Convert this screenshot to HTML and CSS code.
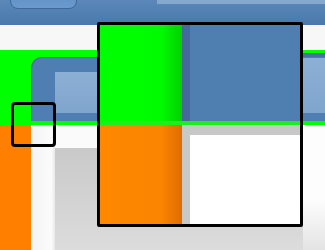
FILE: index.html
```html
<!DOCTYPE html>
<html>
<head>
<meta charset="utf-8">
<link rel="stylesheet" href="styles.css">
</head>
<body>
<div class="screen">
  <div class="topbar">
    <div class="pill"></div>
    <div class="topstrip"></div>
  </div>
  <div class="whiteband"></div>
  <div class="desk">
    <div class="window">
      <div class="title">
        <div class="pane-left"><div class="pane-inner"></div></div>
        <div class="pane-right"><div class="pane-inner"></div></div>
      </div>
      <div class="wbody">
        <div class="frame"></div>
        <div class="content"></div>
        <div class="content-right"></div>
      </div>
    </div>
  </div>
  <div class="marker"></div>
  <div class="magnifier">
    <div class="mrow mtop">
      <div class="mgreen"></div>
      <div class="mshadow"></div>
      <div class="mblue"></div>
    </div>
    <div class="mline"></div>
    <div class="mrow mbottom">
      <div class="morange"></div>
      <div class="mgrey"><div class="mwhite"></div></div>
    </div>
  </div>
</div>
</body>
</html>
```
FILE: styles.css
```css
html, body {
  margin: 0;
  padding: 0;
}
.screen {
  position: relative;
  width: 325px;
  height: 250px;
  overflow: hidden;
  display: flex;
  flex-direction: column;
}
.topbar {
  height: 25px;
  flex: none;
  position: relative;
  background: linear-gradient(to bottom, #5b88b9, #4a78aa);
}
.pill {
  position: absolute;
  left: 10px;
  top: -10px;
  width: 65px;
  height: 17px;
  border: 1px solid #3d6899;
  border-radius: 8px;
  background: linear-gradient(to bottom, #5e8fc4, #6a9acd);
}
.topstrip {
  position: absolute;
  left: 157px;
  right: 0;
  top: 0;
  height: 4px;
  background: #86a8cd;
}
.whiteband {
  height: 25px;
  flex: none;
  background: #f7f7f7;
}
.desk {
  flex: 1;
  background: linear-gradient(to bottom, #00ff00 0 75px, #ff8000 75px);
  padding-top: 7px;
  padding-left: 31px;
  display: flex;
}
.window {
  flex: 1;
  display: flex;
  flex-direction: column;
}
.title {
  height: 64px;
  display: flex;
  box-sizing: border-box;
  background: #4f7fb2;
  border-top: 1px solid #3f6d9f;
  border-left: 1px solid #3f6d9f;
  border-radius: 11px 0 0 0;
  padding-left: 23px;
  margin-bottom: 4px;
}
.pane-left {
  flex: 1;
  padding-top: 14px;
  padding-bottom: 8px;
  display: flex;
}
.pane-right {
  width: 22px;
  margin-top: -5px;
  border-top: 4px solid #46709f;
  background: #4f7fb2;
  padding-top: 1px;
  padding-bottom: 8px;
  display: flex;
}
.pane-inner {
  flex: 1;
  background: linear-gradient(to bottom, #8cafd5, #80a5cc);
}
.wbody {
  flex: 1;
  display: flex;
}
.frame {
  width: 24px;
  background: linear-gradient(to right, #f4f4f4, #fbfbfb 85%, #e8e8e8);
}
.content {
  flex: 1;
  background: linear-gradient(to bottom, #fafafa 0 23px, #c9c9c9 23px, #dcdcdc 100%);
}
.content-right {
  width: 22px;
  background: linear-gradient(to bottom, #fdfdfd 0 60%, #e4e4e4 100%);
}
.marker {
  position: absolute;
  left: 11px;
  top: 102px;
  width: 45px;
  height: 45px;
  box-sizing: border-box;
  border: 3px solid #000;
  border-radius: 4px;
}
.magnifier {
  position: absolute;
  left: 97px;
  top: 22px;
  width: 206px;
  height: 205px;
  box-sizing: border-box;
  border: 3px solid #000;
  border-radius: 2px;
  overflow: hidden;
  display: flex;
  flex-direction: column;
  background: #fff;
}
.mrow {
  display: flex;
}
.mtop {
  height: 96px;
}
.mgreen {
  width: 82px;
  background: linear-gradient(to right, #00ff00 0, #00fb00 75%, #00d000 100%);
}
.mshadow {
  width: 8px;
  background: #46699b;
}
.mblue {
  flex: 1;
  background: #4f7fb0;
}
.mline {
  height: 4px;
  background: #1cf01c;
}
.mbottom {
  flex: 1;
}
.morange {
  width: 82px;
  background: linear-gradient(to right, #ff8800 0, #fb8400 75%, #e06c00 100%);
}
.mgrey {
  flex: 1;
  background: #c8c8c8;
  padding: 10px 0 0 8px;
  display: flex;
}
.mwhite {
  flex: 1;
  background: #ffffff;
}
```
